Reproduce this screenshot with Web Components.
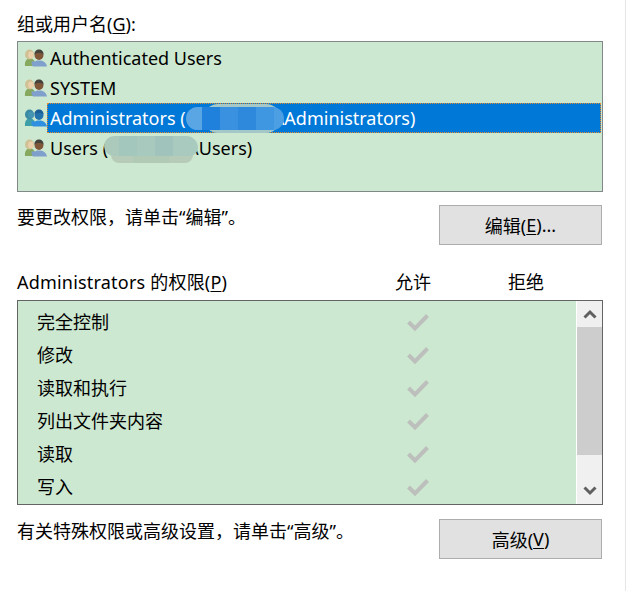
<!DOCTYPE html>
<html lang="zh">
<head>
<meta charset="utf-8">
<style>
  html, body { margin: 0; background: #fff; }
  body { font: 18px "Noto Sans", "Noto Sans CJK SC", sans-serif; color: #000; }
</style>
</head>
<body>
<security-page></security-page>

<template id="group-icon">
  <svg width="24" height="20" viewBox="0 0 24 20">
    <path class="a" d="M1 18c-.5-4 1-7.500 5-7.500s5 3 6 7.500z"/>
    <ellipse class="h" cx="5.500" cy="6.500" rx="4.500" ry="5"/>
    <ellipse class="f" cx="7" cy="7" rx="2.800" ry="3.400"/>
    <path class="b" d="M9 18.500c-1.500-2-2-4-1-5.500 2 1 3.500.500 5-.500h4c3 .500 5.500 2.500 6 6z"/>
    <circle class="e" cx="15" cy="7.500" r="4.400"/>
    <path class="d" d="M10.500 7c-.5-3.500 2-5.500 4.500-5.500s5 2 4.500 5.500c-1-1.500-2-2-4.500-2s-3.500 .5-4.500 2z"/>
  </svg>
</template>

<script>
class GroupIcon extends HTMLElement {
    connectedCallback() {
        const shadow = this.attachShadow({ mode: "open" });
        const on = this.hasAttribute("selected");
        shadow.innerHTML = `
          <style>
          :host { display: block; width: 23px; height: 20px; flex: none; }
          svg { display: block; }
          .a { fill: ${on ? "#3f9fa8" : "#86a95f"}; }
          .h { fill: ${on ? "#3b8aa3" : "#cfc195"}; }
          .f { fill: ${on ? "#4595b2" : "#ecd0ac"}; }
          .b { fill: ${on ? "#2f8fe0" : "#7fa0cc"}; }
          .d { fill: ${on ? "#1c5f95" : "#45423c"}; }
          .e { fill: ${on ? "#2272ac" : "#805639"}; }
          </style>
        `;
        shadow.appendChild(document.getElementById("group-icon").content.cloneNode(true));
    }
}
customElements.define("group-icon", GroupIcon);

// smudge painted over the account names in the screenshot
class BlurMask extends HTMLElement {
    connectedCallback() {
        const shadow = this.attachShadow({ mode: "open" });
        const dark = this.hasAttribute("on-blue");
        shadow.innerHTML = `
          <style>
          :host { display: inline-block; position: relative; width: var(--w, 92px); height: 30px; vertical-align: top; }
          i { position: absolute; display: block; }
          </style>
          ${dark ? `
            <i style="left:18px;right:-2px;top:1px;height:29px;border-radius:14px;background:#a4c8c8"></i>
            <i style="left:0;right:-6px;top:4px;height:23px;border-radius:12px;background:linear-gradient(90deg,#5aa6e4 0 16px,#1f81dc 16px 34px,#3a91e0 34px 52px,#2e89dd 52px 70px,#3f97e1 70px 88px,#4c9fe3 88px)"></i>
          ` : `
            <i style="left:3px;right:-1px;top:14px;height:16px;border-radius:10px;background:linear-gradient(90deg,#b7ccb8 0 22px,#b1cab6 22px 58px,#b6ccb9 58px)"></i>
            <i style="left:-4px;right:-6px;top:3px;height:20px;border-radius:12px 14px 10px 12px;background:linear-gradient(90deg,#abcabc 0 15px,#a3c6bd 15px 33px,#a8c9bd 33px 51px,#a0c4bb 51px 69px,#a8cabf 69px)"></i>
          `}
        `;
    }
}
customElements.define("blur-mask", BlurMask);

class GroupRow extends HTMLElement {
    connectedCallback() {
        const shadow = this.attachShadow({ mode: "open" });
        const on = this.hasAttribute("selected");
        shadow.innerHTML = `
          <style>
          :host { display: flex; align-items: center; height: 30px; padding-left: 6px; }
          .name { height: 30px; line-height: 31px; padding-left: 3px; flex: 1; white-space: nowrap; box-sizing: border-box; }
          :host([selected]) .name { background: #0078d7; color: #fff; outline: 1px dotted #e08a2c; outline-offset: -1px; }
          </style>
          <group-icon ${on ? "selected" : ""}></group-icon>
          <div class="name"><slot></slot></div>
        `;
    }
}
customElements.define("group-row", GroupRow);

class GroupList extends HTMLElement {
    connectedCallback() {
        const shadow = this.attachShadow({ mode: "open" });
        shadow.innerHTML = `
          <style>
          :host { display: block; height: 151px; box-sizing: border-box; border: 1px solid #82878a; background: #cde8d0; padding: 1px 1px 0 0; }
          </style>
          <slot></slot>
        `;
    }
}
customElements.define("group-list", GroupList);

class DialogButton extends HTMLElement {
    connectedCallback() {
        const shadow = this.attachShadow({ mode: "open" });
        shadow.innerHTML = `
          <style>
          :host { display: flex; align-items: center; justify-content: center; width: 163px; height: 40px; box-sizing: border-box; border: 1px solid #adadad; background: #e1e1e1; }
          </style>
          <slot></slot>
        `;
    }
}
customElements.define("dialog-button", DialogButton);

class PermRow extends HTMLElement {
    connectedCallback() {
        const shadow = this.attachShadow({ mode: "open" });
        shadow.innerHTML = `
          <style>
          :host { display: grid; grid-template-columns: 369px 24px; align-items: center; height: 33px; padding-left: 19px; }
          svg { display: block; margin-top: 3px; }
          </style>
          <div><slot></slot></div>
          <svg width="24" height="20" viewBox="0 0 24 20"><path d="M2.500 10l6.500 6.500L21.500 3.500" fill="none" stroke="#bcbfbc" stroke-width="4"/></svg>
        `;
    }
}
customElements.define("perm-row", PermRow);

class ScrollBar extends HTMLElement {
    connectedCallback() {
        const shadow = this.attachShadow({ mode: "open" });
        shadow.innerHTML = `
          <style>
          :host { display: flex; flex-direction: column; width: 26px; box-sizing: border-box; background: #f0f0f0; border-left: 1px solid #fff; }
          .arrow { height: 26px; display: flex; align-items: center; justify-content: center; }
          .track { flex: 1; }
          .thumb { height: 128px; background: #cdcdcd; }
          svg { display: block; }
          </style>
          <div class="arrow"><svg width="14" height="10" viewBox="0 0 14 10"><path d="M1.500 8.500L7 3l5.500 5.500" fill="none" stroke="#606060" stroke-width="3"/></svg></div>
          <div class="thumb"></div>
          <div class="track"></div>
          <div class="arrow"><svg width="14" height="10" viewBox="0 0 14 10"><path d="M1.500 1.500L7 7l5.500-5.500" fill="none" stroke="#606060" stroke-width="3"/></svg></div>
        `;
    }
}
customElements.define("scroll-bar", ScrollBar);

class PermList extends HTMLElement {
    connectedCallback() {
        const shadow = this.attachShadow({ mode: "open" });
        shadow.innerHTML = `
          <style>
          :host { display: flex; height: 205px; box-sizing: border-box; border: 1px solid #646464; background: #cde8d0; overflow: hidden; }
          .rows { flex: 1; padding-top: 3px; overflow: hidden; }
          </style>
          <div class="rows"><slot></slot></div>
          <scroll-bar></scroll-bar>
        `;
    }
}
customElements.define("perm-list", PermList);

class SecurityPage extends HTMLElement {
    connectedCallback() {
        const shadow = this.attachShadow({ mode: "open" });
        shadow.innerHTML = `
          <style>
          :host { display: block; box-sizing: border-box; width: 626px; height: 591px; padding: 11px 22px 0 17px; border-right: 1px solid #e6e6e6; }
          u { text-underline-offset: 2px; }
          .label { line-height: 26px; height: 30px; }
          .action { display: flex; justify-content: space-between; margin-top: 13px; padding-right: 1px; }
          .action span { line-height: 24px; }
          .head { display: grid; grid-template-columns: 378px 36px 77px 36px; margin-top: 22px; height: 33px; line-height: 31px; }
          .head span:first-child { letter-spacing: 0.2px; }
          .foot { margin-top: 14px; }
          </style>
          <div class="label">组或用户名(<u>G</u>):</div>
          <group-list>
            <group-row>Authenticated Users</group-row>
            <group-row>SYSTEM</group-row>
            <group-row selected>Administrators (<blur-mask on-blue></blur-mask>\\Administrators)</group-row>
            <group-row>Users (<blur-mask style="--w:84px"></blur-mask>\\Users)</group-row>
          </group-list>
          <div class="action">
            <span>要更改权限，请单击“编辑”。</span>
            <dialog-button>编辑(<u>E</u>)...</dialog-button>
          </div>
          <div class="head"><span>Administrators 的权限(<u>P</u>)</span><span>允许</span><span></span><span>拒绝</span></div>
          <perm-list>
            <perm-row>完全控制</perm-row>
            <perm-row>修改</perm-row>
            <perm-row>读取和执行</perm-row>
            <perm-row>列出文件夹内容</perm-row>
            <perm-row>读取</perm-row>
            <perm-row>写入</perm-row>
          </perm-list>
          <div class="action foot">
            <span>有关特殊权限或高级设置，请单击“高级”。</span>
            <dialog-button>高级(<u>V</u>)</dialog-button>
          </div>
        `;
    }
}
customElements.define("security-page", SecurityPage);
</script>
</body>
</html>
